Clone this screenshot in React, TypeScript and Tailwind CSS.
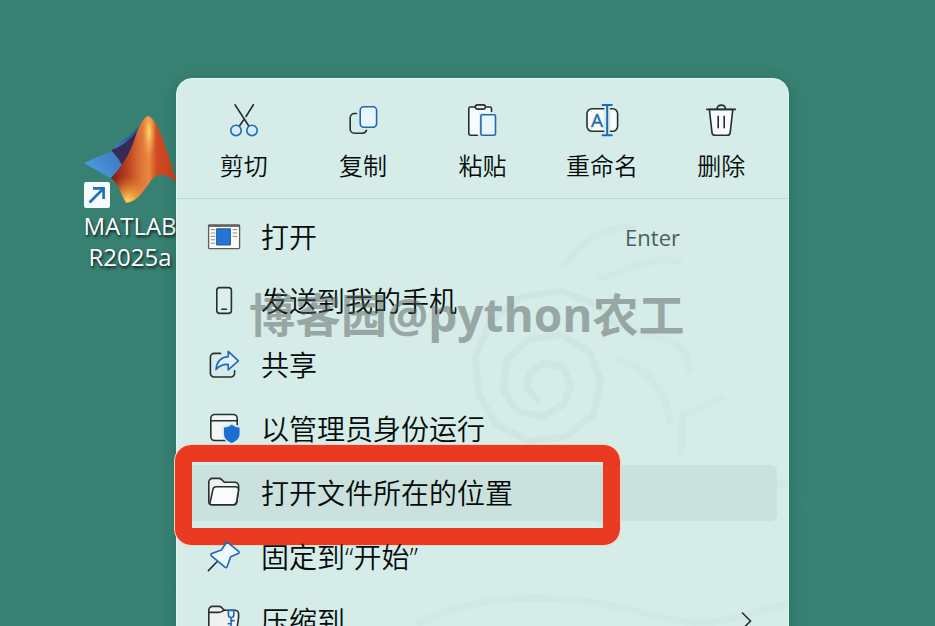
import React from 'react';

const ink = '#26302f';
const blue = '#1f68b5';

const Icon = ({size, children}: { size: number, children: React.ReactNode }) =>
  <svg width={size} height={size} viewBox={`0 0 ${size} ${size}`} fill="none" stroke={ink} strokeWidth="1.6"
       strokeLinecap="round" strokeLinejoin="round" className="shrink-0 overflow-visible" aria-hidden="true">
    {children}
  </svg>;

const actions = [
  {
    name: '剪切', icon: <Icon size={36}>
      <path d="M9 2.8 22.8 24M27.4 2.8 20 14.5M17.4 18.2 13.4 24"/>
      <circle cx="10" cy="28.4" r="5.2" stroke={blue} fill="#d3ecfb"/>
      <circle cx="26" cy="28.4" r="5.2" stroke={blue} fill="#d3ecfb"/>
    </Icon>
  },
  {
    name: '复制', icon: <Icon size={36}>
      <path d="M11.5 11.5H9.5a4.3 4.3 0 0 0-4.3 4.3V27a4.3 4.3 0 0 0 4.3 4.3H17a4.6 4.6 0 0 0 4.5-3"/>
      <rect x="15.2" y="4.8" width="16.4" height="20.4" rx="3.6" stroke={blue} fill="#e9f6ff"/>
    </Icon>
  },
  {
    name: '粘贴', icon: <Icon size={36}>
      <path d="M5 5.6h22V33H5z" fill="#f8fbfb" stroke="none"/>
      <path d="M13.4 33.2H6.4a1.6 1.6 0 0 1-1.6-1.6V6.6A1.6 1.6 0 0 1 6.4 5h19.5a1.6 1.6 0 0 1 1.6 1.6v2.8"/>
      <rect x="11.4" y="2.9" width="10" height="4.2" rx="2" fill="#e6eeec"/>
      <rect x="15" y="11" width="18" height="24" fill="#d5ece8" stroke="none"/>
      <rect x="16.9" y="12.8" width="14.6" height="20.4" rx="1.5" stroke={blue} fill="#e9f6ff"/>
    </Icon>
  },
  {
    name: '重命名', icon: <Icon size={36}>
      <path d="M19.6 29.3H8a5 5 0 0 1-5-5V11.7a5 5 0 0 1 5-5h11.6M26.6 6.7h2a5 5 0 0 1 5 5v12.6a5 5 0 0 1-5 5h-2" fill="#f8fbfb"/>
      <path d="M18.6 3h9.2M18.6 33.2h9.2M23.2 3v30.2" stroke={blue} strokeWidth="2"/>
      <text x="13" y="25" textAnchor="middle" fontSize="19" fill={blue} stroke={blue} strokeWidth=".4"
            className="font-['Open_Sans',sans-serif] font-normal">A</text>
    </Icon>
  },
  {
    name: '删除', icon: <Icon size={36}>
      <path d="M6.4 7.5 9 30.6a3 3 0 0 0 3 2.7h12.2a3 3 0 0 0 3-2.7L29.8 7.5z" fill="#f8fbfb"/>
      <path d="M3.8 7.4h28.6M14 7.2c.4-5.4 8.2-5.4 8.6 0M15.2 14.2v11.6M21.2 14.2v11.6"/>
    </Icon>
  },
];

const FolderShape = () =>
  <path d="M.8 5A3.6 3.6 0 0 1 4.4 1.4h6.5c1.2 0 2 .4 2.8 1.2l2.6 2.6H27a3.6 3.6 0 0 1 3.6 3.6v3.6L28.8 25a3.4 3.4 0 0 1-3.3 2.8H3.8A3 3 0 0 1 .8 24.8z" fill="#f0f2f2"/>;

const items = [
  {
    name: '打开', shortcut: 'Enter', icon: <Icon size={32}>
      <rect x=".6" y="4" width="31" height="23.6" rx=".8" fill="#fafafa" stroke="#625b56" strokeWidth="1.3"/>
      <path d="M1.2 5.2h29.8" stroke="#45423f" strokeWidth="1.2"/>
      <rect x="9" y="7.8" width="13.4" height="16.2" fill="#2476d2" stroke="#185aa8" strokeWidth="1"/>
      <path d="M3.2 8.6h3.6M3.2 12h3.6M3.2 15.4h3.6M3.2 18.8h3.6M3.2 22.2h3.6M25 8.6h3.8M25 12h3.8M25 15.4h3.8"
            stroke="#8c8c8c" strokeWidth="1"/>
    </Icon>
  },
  {
    name: '发送到我的手机', icon: <Icon size={32}>
      <rect x="8.8" y="2.6" width="14.6" height="25.8" rx="2.8" fill="#dcefeb"/>
      <path d="M13.8 24.3h4.6"/>
    </Icon>
  },
  {
    name: '共享', icon: <Icon size={32}>
      <path d="M12.6 4.4H6.2a3.8 3.8 0 0 0-3.8 3.8v16a3.8 3.8 0 0 0 3.8 3.8h16.6a3.8 3.8 0 0 0 3.8-3.8v-2.4"/>
      <path d="M20.2 2.4 30.4 11.8 20.2 20.8v-5.4c-5.6-.4-9 1.4-12.2 5.2.6-7.4 4.8-12.4 12.2-13z" stroke={blue} fill="#dff1fc"/>
    </Icon>
  },
  {
    name: '以管理员身份运行', icon: <Icon size={32}>
      <rect x="2.8" y="1.5" width="26.4" height="26" rx="4" fill="#f4f6f6"/>
      <path d="M3 7.8h26"/>
      <path d="M23.8 9.4c-2.4 2.2-5.4 3-9.4 3.2v8c0 5 3.4 8.8 9.4 11.4 6-2.6 9.4-6.4 9.4-11.4v-8c-4-.2-7-1-9.4-3.2z" fill="#d5ece8" stroke="none"/>
      <path d="M23.8 11.4c-2.2 2-4.6 2.8-7.8 3v6.4c0 4.4 2.8 7.2 7.8 9.2 5-2 7.8-4.8 7.8-9.2v-6.4c-3.2-.2-5.6-1-7.8-3z" fill="#1c6fd0" stroke="none"/>
    </Icon>
  },
  {
    name: '打开文件所在的位置', marked: true, icon: <Icon size={32}>
      <FolderShape/>
      <path d="M1.8 26.8 5 12.2a3.2 3.2 0 0 1 3.1-2.5h19.5a3 3 0 0 1 2.9 3.5L28.6 25a3.4 3.4 0 0 1-3.3 2.8H3.8c-1 0-1.6-.4-2-1z" fill="#fbfbfb"/>
    </Icon>
  },
  {
    name: '固定到“开始”', icon: <Icon size={32}>
      <path d="M.4 29.6 9 20.8"/>
      <path d="M19 .8 30.6 10.4c.8.8.6 1.8-.4 2.2l-7.6 3.2-3.4 9.8c-.4 1.2-1.4 1.4-2.2.6L3.4 14.8c-.9-.8-.6-1.8.4-2.2l9.6-3.6z" stroke={blue} fill="#eef8ff"/>
    </Icon>
  },
  {
    name: '压缩到', submenu: true, icon: <Icon size={32}>
      <FolderShape/>
      <path d="M1 7.4h10c1.4 0 2.2-.4 3-1l2.3-1.2"/>
      <path d="M20.4 5.4h5.4v4.4a2.7 2.7 0 0 1-5.4 0zM23.1 12.6v14M23.1 15.6h3M20.2 18.8h2.9M23.1 22h3" fill="#e6f3fd" stroke={blue}/>
    </Icon>
  },
];

export default function App() {
  return <main className="relative flex h-screen overflow-hidden bg-[#378072] font-['Open_Sans','Noto_Sans_CJK_SC',sans-serif] text-[#050b0a]">
    <Wallpaper/>
    <div className="w-44 shrink-0 pt-28 pl-[84px]">
      <Shortcut/>
    </div>
    <ContextMenu/>
    <div className="pointer-events-none absolute top-[282px] left-[249px] text-[46px] leading-[64px] font-bold whitespace-nowrap text-[#5b6260]/50">
      博客园@python农工
    </div>
  </main>;
}

const Wallpaper = () =>
  <svg className="pointer-events-none absolute inset-0" width="935" height="626" fill="none" stroke="#418a7c" strokeWidth="6" opacity=".18" aria-hidden="true">
    <path d="M560 22C660 40 740 52 800 70S900 72 935 60M790 500c50 20 90 24 145 10M0 560c60-10 110 10 176 30"/>
  </svg>;

const Shortcut = () =>
  <a href="#matlab" className="relative flex w-24 flex-col items-center text-white">
    <MatlabLogo/>
    <span className="absolute top-[70px] left-0 flex h-[26px] w-[26px] items-center justify-center rounded-xs bg-[#f5fafd]">
      <svg width="20" height="20" viewBox="0 0 20 20" fill="none" stroke="#1d6fba" strokeWidth="2.6" aria-hidden="true">
        <path d="M2.5 17.5 16 4M6 3.4h10.6V14"/>
      </svg>
    </span>
    <span className="mt-1.5 -ml-1 text-center text-2xl leading-[31px] [text-shadow:1px_2px_3px_#000c]">
      MATLAB<br/>R2025a
    </span>
  </a>;

const MatlabLogo = () =>
  <svg width="96" height="92" viewBox="0 0 96 92" aria-hidden="true">
    <defs>
      <linearGradient id="membrane" x1="28" y1="0" x2="94" y2="0" gradientUnits="userSpaceOnUse">
        <stop offset="0" stopColor="#7d1f18"/>
        <stop offset=".22" stopColor="#b93f20"/>
        <stop offset=".42" stopColor="#dc6f35"/>
        <stop offset=".56" stopColor="#e88a42"/>
        <stop offset=".68" stopColor="#cf4a1f"/>
        <stop offset="1" stopColor="#c9401f"/>
      </linearGradient>
      <linearGradient id="wing" x1="0" y1="52" x2="60" y2="14" gradientUnits="userSpaceOnUse">
        <stop offset="0" stopColor="#4d9be0"/>
        <stop offset=".5" stopColor="#3c78bd"/>
        <stop offset="1" stopColor="#27406f"/>
      </linearGradient>
      <radialGradient id="glow" cx="44" cy="88" r="24" gradientUnits="userSpaceOnUse">
        <stop offset="0" stopColor="#ffd75e"/>
        <stop offset="1" stopColor="#f08a2c" stopOpacity="0"/>
      </radialGradient>
      <radialGradient id="crest" cx="0" cy="0" r="1" gradientTransform="translate(65 20) scale(7 28)" gradientUnits="userSpaceOnUse">
        <stop offset="0" stopColor="#ffd873"/>
        <stop offset="1" stopColor="#f39a3e" stopOpacity="0"/>
      </radialGradient>
    </defs>
    <path d="M0 51 29 38C33 30 37 28 42 26 50 22 56 12 64 4L40 58 26 66z" fill="url(#wing)"/>
    <path d="M27 38c10-3 16-8 26-18-3 13-9 25-15 33-3-6-7-11-11-15z" fill="#352b54"/>
    <path d="M64 4C58 6 54 17 51 26 46 42 38 54 27 66 33 70 36 80 42 91 52 90 57 82 64 73 71 61 80 58 95 73 85 52 77 8 64 4z" fill="url(#membrane)"/>
    <path d="M64 4C58 6 54 17 51 26 46 42 38 54 27 66 33 70 36 80 42 91 52 90 57 82 64 73 71 61 80 58 95 73 85 52 77 8 64 4z" fill="url(#glow)"/>
    <path d="M64 4C58 6 54 17 51 26 46 42 38 54 27 66 33 70 36 80 42 91 52 90 57 82 64 73 71 61 80 58 95 73 85 52 77 8 64 4z" fill="url(#crest)"/>
  </svg>;

const ContextMenu = () =>
  <div className="relative mt-[78px] h-[640px] max-w-[613px] flex-1 rounded-t-2xl border border-[#e2f5f1] bg-[#d5ece8] shadow-[0_4px_14px_#0a4a3c55]">
    <Clouds/>
    <div className="relative grid grid-cols-5 border-b border-[#bcd8d3] px-[7px] pt-[23px] pb-3">
      {actions.map(action =>
        <button key={action.name} className="flex flex-col items-center gap-2 text-2xl leading-10 font-[350]">
          {action.icon}
          {action.name}
        </button>)}
    </div>
    <ul className="relative flex flex-col gap-2 px-[11px] pt-[10px]">
      {items.map(item => <MenuItem key={item.name} item={item}/>)}
    </ul>
  </div>;

const MenuItem = ({item}: { item: any }) =>
  <li className="relative">
    <button className={`flex h-14 w-full items-center gap-[21px] rounded-md pr-6 pl-5 text-left text-[28px] ${item.marked ? 'bg-[#cbe1dd]' : ''}`}>
      {item.icon}
      <span className="font-[350]">{item.name}</span>
      <span className="ml-auto text-[22px] text-[#4c5f5c]">{item.shortcut}</span>
      <span className="flex w-13 justify-end">
        {item.submenu ? <svg width="12" height="20" viewBox="0 0 12 20" fill="none" stroke={ink} strokeWidth="1.6" aria-hidden="true">
          <path d="M1 1.5 9.5 10 1 18.5"/>
        </svg> : null}
      </span>
    </button>
    {item.marked ? <div className="pointer-events-none absolute -top-5 -bottom-6 -left-[13px] w-[445px] rounded-2xl border-[17px] border-[#ea3a22] outline outline-[#f3d5c4]"/> : null}
  </li>;

// faint cloud scrolls showing through the menu
const Clouds = () =>
  <svg className="pointer-events-none absolute inset-0" width="611" height="548" fill="none" stroke="#cbe3df" strokeWidth="7" opacity=".5" aria-hidden="true">
    <path d="M362 322l-12-12 2-16 16-10 18 4 8 18-8 20-22 12-24-6-14-22 4-30 22-20 32-4 28 16 12 30-8 34-28 22-36 4-32-16-18-30-4-38 16-36 30-24 40-6 36 14 24 24"/>
    <path d="M440 282c24 0 50 30 54 64M448 246c16 14 48 10 60 28l6 20M420 200c30-6 60-28 84-16M386 190c18-30 44-44 72-40M504 376l2-40 40-18M300 400c90-18 190 14 311 4M420 445l34-34-18-30M240 545c70-36 160-30 230-10s90 0 141-10" opacity=".7"/>
  </svg>;
